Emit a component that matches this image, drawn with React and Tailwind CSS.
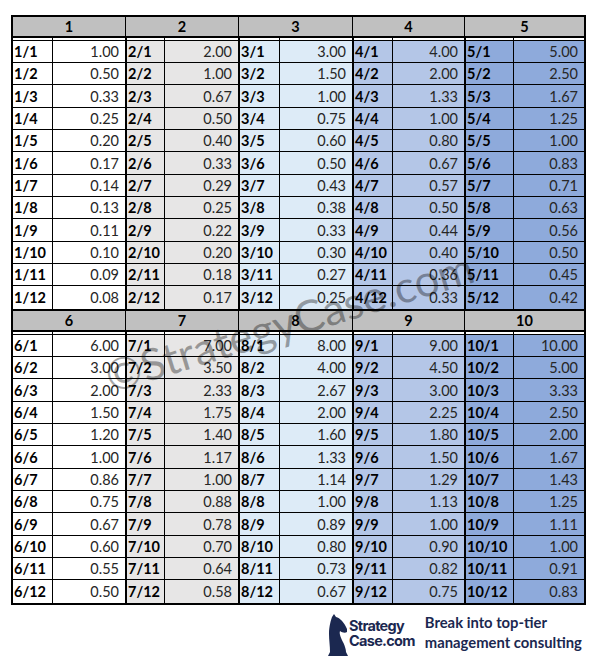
import clsx from 'clsx';

/* Division table: n/d for n = 1..10, d = 1..12, two blocks of five columns */

const GROUP_BG = ['bg-white', 'bg-[#e7e6e6]', 'bg-[#ddebf7]', 'bg-[#b4c6e7]', 'bg-[#8eaadb]'];
const ROW_COLS = 'grid grid-cols-[39px_73px_39px_74px_41px_73px_40px_72px_49px_71px]';
const HEAD_COLS = 'grid grid-cols-[112px_113px_114px_112px_120px]';
const DENOMS = [1, 2, 3, 4, 5, 6, 7, 8, 9, 10, 11, 12];

function HeaderRow({ nums, first }) {
  return (
    <div className={clsx(HEAD_COLS, 'bg-[#c0c0c0] border-b-2 border-black', first ? 'h-[21px]' : 'h-[23px] border-t-2')}>
      {nums.map((n, i) => (
        <div key={n} className={clsx('flex items-center justify-center font-bold text-black', i > 0 && 'border-l border-black')}>
          {n}
        </div>
      ))}
    </div>
  );
}

function Spacer() {
  return (
    <div className={clsx(ROW_COLS, 'h-[3px] bg-white border-b border-black')}>
      {Array.from({ length: 10 }).map((_, i) => (
        <div key={i} className={clsx(i > 0 && (i % 2 === 0 ? 'border-l-2' : 'border-l'), 'border-black')} />
      ))}
    </div>
  );
}

function DataRow({ nums, d, idx, last }) {
  return (
    <div className={clsx(ROW_COLS, idx % 3 === 2 ? 'h-[23px]' : 'h-[22px]', !last && 'border-b border-black')}>
      {nums.map((n, g) => [
        <div
          key={n + 'l'}
          className={clsx('flex items-center pl-[1px] font-bold text-black border-black', GROUP_BG[g], g > 0 && 'border-l-2')}
        >
          {n}/{d}
        </div>,
        <div
          key={n + 'v'}
          className={clsx('flex items-center justify-end pr-[6px] text-[#262626] border-l border-black', GROUP_BG[g])}
        >
          {(n / d).toFixed(2)}
        </div>,
      ])}
    </div>
  );
}

function Block({ nums, first }) {
  return (
    <>
      <HeaderRow nums={nums} first={first} />
      <Spacer />
      {DENOMS.map((d, i) => (
        <DataRow key={d} nums={nums} d={d} idx={i} last={i === DENOMS.length - 1} />
      ))}
    </>
  );
}

function Knight() {
  return (
    <svg width="20" height="42" viewBox="0 0 20 42" className="shrink-0">
      <path
        d="M6 0 L8 3 C12 4 16 8 19 15 L19 18 C17 19.5 14 18.5 12 17 C11 20 13 24 15.5 29 C17 32.5 18 35.5 18 38 L20 42 L0 42 L2 38 C2 32 1 26 1 20 C1 12 3 6 4 3 Z"
        fill="#1b2850"
      />
    </svg>
  );
}

export default function App() {
  return (
    <div className="w-[600px] h-[662px] bg-white font-['Lato','Liberation_Sans',sans-serif] text-[14.5px] leading-[17px] overflow-hidden">
      <div className="relative ml-[11px] mt-[15px] w-[575px] border-2 border-black">
        <Block nums={[1, 2, 3, 4, 5]} first />
        <Block nums={[6, 7, 8, 9, 10]} />

        {/* watermark */}
        <span className="pointer-events-none absolute left-[276px] top-[304px] -translate-x-1/2 -translate-y-1/2 -rotate-[17deg] whitespace-nowrap text-[44px] leading-none text-black/35">
          ©StrategyCase.com
        </span>
      </div>

      {/* footer */}
      <div className="flex items-start ml-[328px] mt-[9px]">
        <Knight />
        <div className="ml-[1px] mt-[4px] flex flex-col text-[14.5px] leading-[15px] font-bold tracking-[-0.7px] text-[#1b2850] font-['Inter',sans-serif]">
          <span>Strategy</span>
          <span>Case.com</span>
        </div>
        <div className="ml-[10px] mt-[-2px] flex flex-col text-[14.8px] leading-[20px] font-bold text-[#1b2850]">
          <span>Break into top-tier</span>
          <span>management consulting</span>
        </div>
      </div>
    </div>
  );
}
